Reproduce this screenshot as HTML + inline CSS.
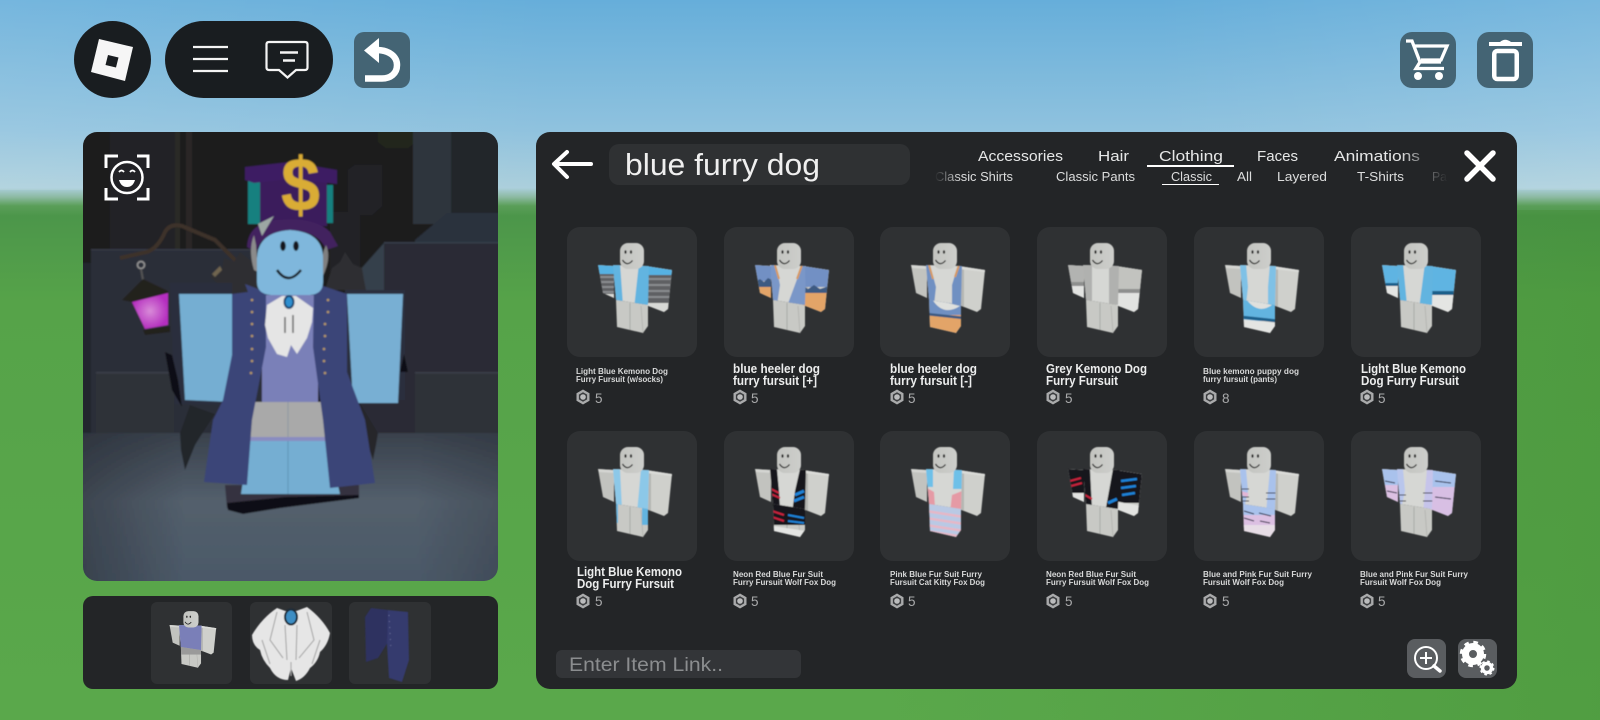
<!DOCTYPE html>
<html><head><meta charset="utf-8"><title>Avatar Editor</title>
<style>
html,body{margin:0;padding:0;width:1600px;height:720px;overflow:hidden;background:#5aa84b}
svg{display:block}
text{font-family:"Liberation Sans",sans-serif}
.lg{font-size:12.5px;font-weight:700;fill:#eceded}
.sm{font-size:8.6px;font-weight:700;fill:#d8d9d9}
.pr{font-size:13.5px;fill:#a9aaab}
.tab{font-size:15px;fill:#e6e7e7}
.sub{font-size:12.5px;fill:#dcdddd}
</style></head><body>
<svg width="1600" height="720" viewBox="0 0 1600 720" xmlns="http://www.w3.org/2000/svg">
<defs>
<filter id="s" x="-5%" y="-5%" width="110%" height="110%"><feGaussianBlur stdDeviation=".45"/></filter>
<filter id="s2" x="-5%" y="-5%" width="110%" height="110%"><feGaussianBlur stdDeviation=".7"/></filter>
<linearGradient id="bg" x1="0" y1="0" x2="0" y2="1">
<stop offset="0" stop-color="#66aeda"/><stop offset=".18" stop-color="#8fc2de"/><stop offset=".261" stop-color="#abcfdc"/><stop offset=".274" stop-color="#8bb9a0"/><stop offset=".286" stop-color="#5a9e58"/><stop offset=".3" stop-color="#4c964a"/><stop offset=".42" stop-color="#56a349"/><stop offset="1" stop-color="#5aa84b"/>
</linearGradient>
<linearGradient id="edge" x1="0" x2="1" y1="0" y2="0"><stop offset="0" stop-color="#fff" stop-opacity=".1"/><stop offset=".35" stop-color="#fff" stop-opacity="0"/><stop offset=".72" stop-color="#fff" stop-opacity="0"/><stop offset="1" stop-color="#fff" stop-opacity=".12"/></linearGradient>
<linearGradient id="gr" x1="0" x2="1" y1="0" y2="0"><stop offset="0" stop-color="#3f8a30" stop-opacity="0"/><stop offset=".55" stop-color="#3f8a30" stop-opacity="0"/><stop offset="1" stop-color="#3f8a30" stop-opacity=".35"/></linearGradient>
<linearGradient id="floor" x1="0" y1="0" x2="0" y2="1"><stop offset="0" stop-color="#39414c"/><stop offset=".45" stop-color="#535f6c"/><stop offset="1" stop-color="#4a5867"/></linearGradient>
<linearGradient id="fs" x1="0" x2="1" y1="0" y2="0"><stop offset="0" stop-color="#20242c" stop-opacity=".45"/><stop offset=".25" stop-color="#20242c" stop-opacity="0"/><stop offset=".8" stop-color="#20242c" stop-opacity="0"/><stop offset="1" stop-color="#20242c" stop-opacity=".25"/></linearGradient>
<radialGradient id="lamp"><stop offset="0" stop-color="#d88bd8"/><stop offset="1" stop-color="#b52fbf"/></radialGradient>
<linearGradient id="hd" x1="0" x2="1" y1="0" y2="0"><stop offset="0" stop-color="#c3c4c0"/><stop offset="1" stop-color="#cdcecb"/></linearGradient>
<linearGradient id="fa" x1="935" x2="960" y1="0" y2="0" gradientUnits="userSpaceOnUse"><stop offset="0" stop-color="#dcdddd" stop-opacity="0"/><stop offset="1" stop-color="#dcdddd"/></linearGradient>
<linearGradient id="fb" x1="1432" x2="1447" y1="0" y2="0" gradientUnits="userSpaceOnUse"><stop offset="0" stop-color="#dcdddd" stop-opacity=".35"/><stop offset="1" stop-color="#dcdddd" stop-opacity=".02"/></linearGradient>
<linearGradient id="fc" x1="1400" x2="1420" y1="0" y2="0" gradientUnits="userSpaceOnUse"><stop offset="0" stop-color="#e6e7e7"/><stop offset="1" stop-color="#e6e7e7" stop-opacity=".45"/></linearGradient>
<clipPath id="sc"><rect x="83" y="132" width="415" height="449" rx="14"/></clipPath>
<clipPath id="la"><path d="M31 38L47 39L47 71L36 66Z"/></clipPath>
<clipPath id="ra"><path d="M79 39L105 43L101 82L97 85L79 78Z"/></clipPath>
<clipPath id="to"><path d="M46 38L82 39L81 78L49 73Z"/></clipPath>
<clipPath id="le"><path d="M49 73L81 78L81 99L76 106L50 100Z"/></clipPath>
<g id="b">
<path d="M49 73L81 78L81 99L76 106L50 100Z" fill="#c8c9c5"/>
<path d="M63 76V103" stroke="#a2a39f" stroke-width=".8"/>
<path d="M74 79L76 106" stroke="#b0b1ad" stroke-width=".8"/>
<path d="M31 38L47 39L47 71L36 66Z" fill="#c2c3bf"/><path d="M31 38L47 39L47 42L32 41Z" fill="#d4d5d2"/>
<path d="M79 39L105 43L101 82L97 85L79 78Z" fill="#cfd0cc"/><path d="M79 39L84 40L84 80L79 78Z" fill="#b5b6b2"/><path d="M79 39L105 43L105 45L79 42Z" fill="#dadbd8"/>
<path d="M46 38L82 39L81 78L49 73Z" fill="#d6d7d4"/>
</g>
<g id="h">
<rect x="53" y="16" width="24" height="26" rx="8" fill="url(#hd)"/>
<ellipse cx="58.500" cy="25" rx="1.100" ry="1.800" fill="#222"/><ellipse cx="64" cy="25" rx="1.100" ry="1.800" fill="#222"/>
<path d="M55.500 33Q60 40 65.500 33.500" fill="none" stroke="#151515" stroke-width="1.200"/>
</g>
<g id="rb"><path d="M0-7.500L6.500-3.800V3.800L0 7.500L-6.500 3.800V-3.800Z" fill="#a9aaab"/><path d="M0-4.800L4.100-2.400V2.400L0 4.800L-4.100 2.400V-2.400Z" fill="#3a3c3e"/><circle r="2.800" fill="#bbbcbd"/></g>
</defs>

<rect width="1600" height="720" fill="url(#bg)"/>
<rect width="1600" height="190" fill="url(#edge)"/>
<rect y="210" width="1600" height="510" fill="url(#gr)"/>

<!-- top left -->
<circle cx="112.500" cy="59.500" r="38.500" fill="#191d20"/>
<path d="M99 39L133 47L125 81L91 72Z" fill="#f6f6f6"/><path d="M108 55L118.500 57.500L116 67.500L105.500 65Z" fill="#191d20"/>
<rect x="165" y="21" width="168" height="77" rx="38.500" fill="#191d20"/>
<path d="M193 47H228M193 59H228M193 71H228" stroke="#f4f4f4" stroke-width="2.200"/>
<path d="M269 42H305Q307.500 42 307.500 44.500V67.500Q307.500 70 305 70H296L287.500 77.500L279 70H269Q266.500 70 266.500 67.500V44.500Q266.500 42 269 42Z" fill="none" stroke="#f4f4f4" stroke-width="2.200"/>
<path d="M280 52.500H298M283 60.500H295" stroke="#f4f4f4" stroke-width="2.400"/>
<rect x="354" y="32" width="56" height="56" rx="10" fill="#446474"/>
<path d="M364 50.500L379 38V63Z" fill="#fff"/>
<path d="M376 50C390 50 397 57 397 65C397 74 390 78.500 382 78.500H365" fill="none" stroke="#fff" stroke-width="6.500"/>

<!-- top right -->
<rect x="1400" y="32" width="56" height="56" rx="12" fill="#446474"/>
<path d="M1406 41H1412L1420 62H1441M1420 62L1416 68.500H1444M1414.500 46H1447L1441 60H1421" fill="none" stroke="#fff" stroke-width="3.300"/>
<circle cx="1418" cy="76" r="4" fill="#fff"/><circle cx="1439" cy="76" r="4" fill="#fff"/>
<rect x="1477" y="32" width="56" height="56" rx="12" fill="#446474"/>
<path d="M1489 42H1500Q1505 37.500 1511 42H1522V46H1489Z" fill="#fff"/>
<rect x="1494.250" y="51" width="22.500" height="28" rx="3" fill="none" stroke="#fff" stroke-width="4.500"/>

<!-- avatar viewport -->
<g clip-path="url(#sc)"><g filter="url(#s2)">
<rect x="80" y="130" width="420" height="455" fill="#1a1c1e"/>
<rect x="110" y="130" width="65" height="127" fill="#232428"/>
<rect x="175" y="130" width="5" height="127" fill="#2a2926"/><rect x="186" y="130" width="6" height="127" fill="#292825"/>
<path d="M378 130H418V140L408 148H386L378 142Z" fill="#24261f"/>
<path d="M348 170L355 165H382V206L372 215H348Z" fill="#212328"/>
<rect x="330" y="212" width="30" height="60" fill="#202227"/>
<rect x="413" y="130" width="38" height="94" fill="#2f343e"/><rect x="451" y="130" width="50" height="84" fill="#24262c"/>
<path d="M415 240L447 213H500V243H415Z" fill="#2c323c"/>
<path d="M360 270L384 243H500V433H360Z" fill="#292c36"/><path d="M360 270L384 243V372H360Z" fill="#353f4b"/>
<rect x="384" y="242" width="116" height="1.500" fill="#363c48"/>
<rect x="91" y="250" width="175" height="185" fill="#2a2d38"/><rect x="91" y="249" width="170" height="1.500" fill="#353945"/>
<rect x="80" y="263" width="11" height="170" fill="#23262f"/>
<rect x="96" y="372" width="78" height="62" fill="#2d3039"/><rect x="96" y="372" width="78" height="1.500" fill="#3a3e49"/>
<rect x="415" y="372" width="85" height="62" fill="#2d3039"/><rect x="415" y="372" width="85" height="1.500" fill="#3a3e49"/>
<rect x="80" y="433" width="420" height="152" fill="url(#floor)"/>
<rect x="80" y="433" width="420" height="152" fill="url(#fs)"/>

<!-- lantern -->
<path d="M120 258L147 252Q158 248 165 232Q170 223 182 226L215 240L237 262" fill="none" stroke="#3c3029" stroke-width="4"/>
<circle cx="141" cy="265" r="3.500" fill="none" stroke="#9a9a9a" stroke-width="1.500"/><path d="M141 269L143 280" stroke="#555" stroke-width="2"/>
<path d="M122 300L143 279L168 291V300L132 302Z" fill="#23221f"/>
<path d="M132 302L168 293V325L145 329Z" fill="url(#lamp)"/>
<path d="M143 330L170 326V332L145 335Z" fill="#22201d"/>
<!-- fur & back -->
<path d="M210 277L222 268L224 258L234 262L240 252L250 260L262 262L272 290L232 295L218 284Z" fill="#2e2e30"/><path d="M212 274L220 266L222 270L215 277Z" fill="#6f654f"/>
<path d="M325 290L332 268L340 262L345 252L353 264L362 268L364 280L366 290Z" fill="#2e2e30"/>
<path d="M170 283H232V404H175Z" fill="#2c2d3c"/><path d="M345 290H405V400H345Z" fill="#2c2d3c"/>
<path d="M190 405L215 414L200 437L195 445L185 470L181 450L180 433Z" fill="#24252a"/>
<path d="M360 403L378 433L376 445L373 460L362 428Z" fill="#26262a"/>
<path d="M165 352L172 355L178 380L182 407L172 390Z" fill="#101113"/><path d="M404 354L408 372L400 372Z" fill="#101113"/>
<!-- bottom dark -->
<path d="M225 485H359V498L280 508L243 513L227 508Z" fill="#34323f"/><path d="M227 503L285 497L359 495V498L280 508L243 514L228 510Z" fill="#0f0e12"/>
<!-- body -->
<path d="M262 295H318V402H262Z" fill="#7a80b8"/>
<path d="M253 402H323L327 438H249Z" fill="#a9a9a9"/><path d="M288 402V490" stroke="#8e96a2" stroke-width="1"/>
<rect x="249" y="437" width="78" height="4" fill="#8a8cc0"/>
<path d="M249 441H328L340 494H241Z" fill="#75aed2"/><path d="M288 441V494" stroke="#5f94b5" stroke-width="1"/>
<path d="M179 294H232V402L185 400Z" fill="#75aed2"/>
<path d="M347 294H403L398 403H353Z" fill="#78afd3"/>
<!-- coat -->
<path d="M232 294L248 292L245 284L266 292V347L252 420L247 485L204 482L213 420L223 400L232 355Z" fill="#3b4478"/>
<path d="M314 283L347 294V372L365 420L375 483L330 488L323 420L313 347Z" fill="#3b4478"/>
<g fill="#b89a66"><circle cx="252" cy="300" r="1.300"/><circle cx="252" cy="312" r="1.300"/><circle cx="252" cy="324" r="1.300"/><circle cx="252" cy="336" r="1.300"/><circle cx="252" cy="349" r="1.300"/><circle cx="252" cy="361" r="1.300"/><circle cx="251" cy="373" r="1.300"/><circle cx="328" cy="300" r="1.300"/><circle cx="328" cy="312" r="1.300"/><circle cx="325" cy="324" r="1.300"/><circle cx="325" cy="336" r="1.300"/><circle cx="324" cy="349" r="1.300"/><circle cx="324" cy="361" r="1.300"/><circle cx="325" cy="373" r="1.300"/></g>
<!-- hat -->
<rect x="248" y="180" width="15" height="44" fill="#16807f"/><rect x="326" y="185" width="7" height="38" fill="#16807f"/>
<rect x="260" y="178" width="67" height="48" fill="#3a1c5c"/>
<path d="M245 167L290 162L337 170V184L320 182L290 179L254 183L245 180Z" fill="#3e1f63"/>
<path d="M247 247Q248 224 275 220Q315 216 330 232L338 246L326 250Q320 232 290 230Q262 232 256 252Z" fill="#42205f"/>
<path d="M258 224L274 216L262 236Z" fill="#9ca7a3"/>
<path d="M254 235Q248 250 254 270L258 272L256 245Z" fill="#8b8b8b"/><path d="M326 245Q332 258 322 278L318 272L324 250Z" fill="#7f7f7f"/>
<!-- head -->
<path d="M257 258Q258 232 290 230Q323 232 323 258V282Q323 294 310 295H271Q257 294 257 282Z" fill="#7fb7dc"/>
<ellipse cx="283" cy="246" rx="2.800" ry="5" fill="#15171a"/><ellipse cx="296" cy="246" rx="2.800" ry="5" fill="#15171a"/>
<path d="M277 270Q288 286 301 270" fill="none" stroke="#15171a" stroke-width="2.500"/>
<!-- cravat -->
<path d="M267 305L282 296L296 296L313 308L312 322L307 338L297 354L291 345L287 357L277 354L268 338L265 325Z" fill="#e5e5e5"/>
<path d="M285 317V333M293 315V333" stroke="#333" stroke-width="1.300"/>
<ellipse cx="289" cy="302" rx="5.500" ry="7" fill="#17416a"/><ellipse cx="289" cy="302" rx="3.500" ry="5" fill="#2f8fd0"/>
<text x="281" y="211" font-size="76" font-weight="700" fill="#d9ac34" textLength="39" lengthAdjust="spacingAndGlyphs">$</text>
</g></g>
<!-- face icon -->
<path d="M106 168V156H118M137 156H148V168M148 188V199H137M118 199H106V188" fill="none" stroke="#fff" stroke-width="3"/>
<circle cx="127" cy="177.500" r="15.500" fill="none" stroke="#fff" stroke-width="2.500"/>
<path d="M119 172Q121.500 169 124 172M130 172Q132.500 169 135 172" fill="none" stroke="#fff" stroke-width="1.800"/>
<path d="M119 180H135Q133 187 127 187Q121 187 119 180Z" fill="#fff"/>

<!-- equipped bar -->
<rect x="83" y="596" width="415" height="93" rx="10" fill="#232527"/>
<rect x="151" y="602" width="81" height="82" rx="6" fill="#2f3133"/><rect x="250" y="602" width="82" height="82" rx="6" fill="#2f3133"/><rect x="349" y="602" width="82" height="82" rx="6" fill="#2f3133"/>
<g transform="translate(150,601) scale(.63)" filter="url(#s)"><use href="#b"/><g clip-path="url(#to)"><rect x="46" y="38" width="36" height="42" fill="#7a7fb8"/></g><g clip-path="url(#le)"><rect x="46" y="73" width="36" height="12" fill="#9a9a9a"/></g><use href="#h"/></g>
<g filter="url(#s)">
<path d="M277 608L291 613L307 607Q322 618 330 633Q328 645 320 652Q318 662 310 668Q305 678 296 681L291 668L288 680Q276 680 270 668Q262 660 260 650Q252 645 252 635Q262 618 277 608Z" fill="#e6e6e6"/>
<path d="M277 612L270 640L283 658M307 612L314 640L299 658M285 625L287 660M297 625L296 660M291 662V676M262 640L270 664M320 640L312 664" fill="none" stroke="#adadad" stroke-width="1.200"/>
<ellipse cx="291" cy="617" rx="7" ry="8.500" fill="#1c2a38"/><ellipse cx="291" cy="617" rx="5" ry="6.500" fill="#3d8ec4"/>
<path d="M365 617L371 608L388 610V642L378 658L366 662Z" fill="#2d3260"/><path d="M388 610L408 612L409 660L402 682L389 678L387 645Z" fill="#343a6e"/>
<path d="M389 615L391 650" stroke="#6a6f9a" stroke-width="1" stroke-dasharray="1 5"/>
</g>

<!-- catalog panel -->
<rect x="536" y="132" width="981" height="557" rx="14" fill="#232527"/>
<path d="M591 164H555M567 152L554 164L567 177" fill="none" stroke="#fff" stroke-width="4" stroke-linecap="round" stroke-linejoin="round"/>
<rect x="609" y="144" width="301" height="41" rx="10" fill="#2f3133"/>
<text x="625" y="175" font-size="31" fill="#efefef" textLength="195" lengthAdjust="spacingAndGlyphs">blue furry dog</text>

<text class="tab" x="978" y="161" textLength="85" lengthAdjust="spacingAndGlyphs">Accessories</text>
<text class="tab" x="1098" y="161" textLength="31" lengthAdjust="spacingAndGlyphs">Hair</text>
<text class="tab" x="1159" y="161" textLength="64" lengthAdjust="spacingAndGlyphs">Clothing</text>
<text class="tab" x="1257" y="161" textLength="41" lengthAdjust="spacingAndGlyphs">Faces</text>
<text class="tab" x="1334" y="161" textLength="86" lengthAdjust="spacingAndGlyphs" style="fill:url(#fc)">Animations</text>
<rect x="1147" y="165" width="87" height="2" fill="#fff"/>
<text class="sub" x="935" y="181" textLength="78" lengthAdjust="spacingAndGlyphs" style="fill:url(#fa)">Classic Shirts</text>
<text class="sub" x="1056" y="181" textLength="79" lengthAdjust="spacingAndGlyphs">Classic Pants</text>
<text class="sub" x="1171" y="181" textLength="41" lengthAdjust="spacingAndGlyphs">Classic</text>
<text class="sub" x="1237" y="181" textLength="15" lengthAdjust="spacingAndGlyphs">All</text>
<text class="sub" x="1277" y="181" textLength="50" lengthAdjust="spacingAndGlyphs">Layered</text>
<text class="sub" x="1357" y="181" textLength="47" lengthAdjust="spacingAndGlyphs">T-Shirts</text>
<text class="sub" x="1432" y="181" textLength="15" lengthAdjust="spacingAndGlyphs" style="fill:url(#fb)">Pa</text>
<rect x="1162" y="184" width="57" height="1" fill="#fff"/>
<path d="M1467 153L1493 179M1493 153L1467 179" stroke="#fff" stroke-width="5.500" stroke-linecap="round"/>

<!-- cards -->
<g fill="#2f3133">
<rect x="567" y="227" width="130" height="130" rx="13"/><rect x="724" y="227" width="130" height="130" rx="13"/><rect x="880" y="227" width="130" height="130" rx="13"/><rect x="1037" y="227" width="130" height="130" rx="13"/><rect x="1194" y="227" width="130" height="130" rx="13"/><rect x="1351" y="227" width="130" height="130" rx="13"/>
<rect x="567" y="431" width="130" height="130" rx="13"/><rect x="724" y="431" width="130" height="130" rx="13"/><rect x="880" y="431" width="130" height="130" rx="13"/><rect x="1037" y="431" width="130" height="130" rx="13"/><rect x="1194" y="431" width="130" height="130" rx="13"/><rect x="1351" y="431" width="130" height="130" rx="13"/>
</g>

<!-- R1 C1 -->
<g transform="translate(567,227)" filter="url(#s)"><use href="#b"/>
<g clip-path="url(#la)"><rect x="30" y="36" width="20" height="11" fill="#56b2e3"/><rect x="30" y="47" width="20" height="20" fill="#5e6064"/><path d="M30 50H50M30 55H50M30 60H50M30 65H50" stroke="#8a8c8f" stroke-width="2"/><rect x="30" y="67" width="20" height="5" fill="#d8d9d6"/></g>
<g clip-path="url(#ra)"><rect x="78" y="36" width="30" height="12" fill="#56b2e3"/><rect x="78" y="48" width="30" height="30" fill="#5e6064"/><path d="M78 52H108M78 58H108M78 64H108M78 70H108" stroke="#8a8c8f" stroke-width="2"/><rect x="78" y="76" width="30" height="10" fill="#d8d9d6"/></g>
<g clip-path="url(#to)"><path d="M44 36H53L56 78H44Z" fill="#62b4e0"/><path d="M72 36H86V82H67Z" fill="#62b4e0"/></g><use href="#h"/></g>
<!-- R1 C2 -->
<g transform="translate(724,227)" filter="url(#s)"><use href="#b"/>
<g clip-path="url(#la)"><rect x="30" y="36" width="20" height="18" fill="#7290c4"/><path d="M30 55L36 52L40 55L44 51L50 54V60H30Z" fill="#3e5a82"/><rect x="30" y="60" width="20" height="12" fill="#e3a468"/></g>
<g clip-path="url(#ra)"><rect x="78" y="36" width="30" height="24" fill="#7290c4"/><path d="M78 58L84 62L90 58L96 62L108 58V66H78Z" fill="#3e5a82"/><rect x="78" y="66" width="30" height="20" fill="#e3a468"/></g>
<g clip-path="url(#to)"><path d="M47 38H52L56 58L53 78L45 78Z" fill="#7a97c8"/><path d="M81 38H78L72 55L62 82H82Z" fill="#7a97c8"/><path d="M51 38L55 52M78 38L73 52" stroke="#d89a5e" stroke-width="2"/></g><use href="#h"/></g>
<!-- R1 C3 -->
<g transform="translate(880,227)" filter="url(#s)"><use href="#b"/>
<g clip-path="url(#to)"><path d="M46 38H50L56 60L54 78H46Z" fill="#6f90c2"/><path d="M82 38H78L72 58L72 82H82Z" fill="#6f90c2"/><path d="M49 38L53 52M79 38L75 50" stroke="#d89a5e" stroke-width="2"/></g>
<g clip-path="url(#le)"><rect x="46" y="72" width="38" height="18" fill="#6f90c2"/><path d="M52 72Q63 90 80 79Z" fill="#dfe0dd"/><rect x="46" y="88" width="38" height="20" fill="#e3a468"/><path d="M46 87L84 91" stroke="#3e5a82" stroke-width="2.500"/></g><use href="#h"/></g>
<!-- R1 C4 -->
<g transform="translate(1037,227)" filter="url(#s)"><use href="#b"/>
<g clip-path="url(#la)"><rect x="30" y="36" width="20" height="21" fill="#b2b3b1"/><rect x="30" y="55" width="20" height="4" fill="#8e8f8e"/><rect x="30" y="59" width="20" height="14" fill="#e2e3e1"/></g>
<g clip-path="url(#ra)"><rect x="78" y="36" width="30" height="28" fill="#c2c3bf"/><rect x="78" y="62" width="30" height="4" fill="#8e8f8e"/><rect x="78" y="66" width="30" height="20" fill="#e2e3e1"/></g>
<g clip-path="url(#to)"><rect x="46" y="38" width="9" height="40" fill="#b0b1af"/><rect x="72" y="38" width="12" height="44" fill="#b0b1af"/></g><use href="#h"/></g>
<!-- R1 C5 -->
<g transform="translate(1194,227)" filter="url(#s)"><use href="#b"/>
<g clip-path="url(#to)"><path d="M44 36H52L54 60L52 78H44Z" fill="#7fc1e6"/><path d="M76 36H86V84H74L74 60Z" fill="#7fc1e6"/></g>
<g clip-path="url(#le)"><rect x="46" y="72" width="38" height="22" fill="#62b4e0"/><path d="M52 72Q64 88 78 78Z" fill="#dfe0dd"/><path d="M46 90L84 94" stroke="#1f5f8a" stroke-width="3"/><path d="M46 92L84 96V108H46Z" fill="#e4e5e3"/></g><use href="#h"/></g>
<!-- R1 C6 -->
<g transform="translate(1351,227)" filter="url(#s)"><use href="#b"/>
<g clip-path="url(#la)"><rect x="30" y="36" width="20" height="21" fill="#5fb4e2"/><rect x="30" y="56" width="20" height="3" fill="#1f5f8a"/><rect x="30" y="59" width="20" height="14" fill="#e4e5e3"/></g>
<g clip-path="url(#ra)"><rect x="78" y="36" width="30" height="28" fill="#5fb4e2"/><rect x="78" y="64" width="30" height="4" fill="#1f5f8a"/><rect x="78" y="68" width="30" height="18" fill="#e4e5e3"/></g>
<g clip-path="url(#to)"><path d="M44 36H52L56 78H44Z" fill="#62b4e0"/><path d="M74 36H86V82H68Z" fill="#62b4e0"/></g><use href="#h"/></g>
<!-- R2 C1 -->
<g transform="translate(567,431)" filter="url(#s)"><use href="#b"/>
<g clip-path="url(#to)"><path d="M46 38H53L55 78H46Z" fill="#8cc8e8"/><path d="M74 38H84V82H70Z" fill="#8cc8e8"/></g>
<g clip-path="url(#le)"><rect x="46" y="72" width="5" height="20" fill="#62b4e0"/><rect x="75" y="72" width="9" height="22" fill="#62b4e0"/></g><use href="#h"/></g>
<!-- R2 C2 -->
<g transform="translate(724,431)" filter="url(#s)"><use href="#b"/>
<g clip-path="url(#to)"><path d="M46 38H53L55 60L56 78H46Z" fill="#15161a"/><path d="M76 38H84V82H68L71 60Z" fill="#15161a"/><path d="M47 58L55 62M47 63L56 67" stroke="#c8243c" stroke-width="2"/><path d="M71 64L80 60M70 70L80 66" stroke="#1f82d8" stroke-width="3"/></g>
<g clip-path="url(#le)"><rect x="46" y="72" width="38" height="22" fill="#15161a"/><path d="M48 80L60 84M48 86L60 90" stroke="#c8243c" stroke-width="2"/><path d="M64 84L80 87M64 90L80 92" stroke="#1f82d8" stroke-width="2"/><path d="M49 95L82 100V108H49Z" fill="#e4e5e3"/></g><use href="#h"/></g>
<!-- R2 C3 -->
<g transform="translate(880,431)" filter="url(#s)"><use href="#b"/>
<g clip-path="url(#to)"><path d="M46 38H53L53 56H46Z" fill="#6ec0e8"/><path d="M74 38H84V58H73Z" fill="#6ec0e8"/><path d="M47 57L54 61L55 76H47Z" fill="#e59aa5"/><path d="M72 64L82 60V82H70Z" fill="#e59aa5"/></g>
<g clip-path="url(#le)"><rect x="46" y="72" width="38" height="36" fill="#b9c9e4"/><path d="M46 80L84 86M46 87L84 93M46 94L84 100M46 100L84 106" stroke="#e6b7c6" stroke-width="2.500"/></g><use href="#h"/></g>
<!-- R2 C4 -->
<g transform="translate(1037,431)" filter="url(#s)"><use href="#b"/>
<g clip-path="url(#la)"><rect x="30" y="36" width="20" height="26" fill="#15161a"/><path d="M33 50L44 47M34 55L45 52" stroke="#c8243c" stroke-width="2"/><rect x="30" y="62" width="20" height="12" fill="#e2e3e1"/></g>
<g clip-path="url(#ra)"><rect x="78" y="36" width="30" height="36" fill="#15161a"/><path d="M84 50L100 48M84 57L99 55M85 64L98 62" stroke="#1f82d8" stroke-width="2.500"/><path d="M78 70L108 76V90H78Z" fill="#e2e3e1"/></g>
<g clip-path="url(#to)"><path d="M46 38H53L55 78H46Z" fill="#15161a"/><path d="M76 38H84V82H68Z" fill="#15161a"/><path d="M48 64L55 68" stroke="#c8243c" stroke-width="2"/><path d="M71 72L80 68" stroke="#1f82d8" stroke-width="3"/></g><use href="#h"/></g>
<!-- R2 C5 -->
<g transform="translate(1194,431)" filter="url(#s)"><use href="#b"/>
<g clip-path="url(#to)"><path d="M46 38H52L54 60L50 78H46Z" fill="#a9c2ec"/><path d="M76 38H84V82H72Z" fill="#a9c2ec"/><path d="M47 62L54 64" stroke="#e2b6d6" stroke-width="4"/><path d="M47 58H55M47 66H55M47 70H55" stroke="#2a2a3a" stroke-width="1"/><path d="M72 62H82M72 68H82" stroke="#2a2a3a" stroke-width="1"/></g>
<g clip-path="url(#le)"><rect x="46" y="72" width="38" height="12" fill="#a9c2ec"/><rect x="46" y="84" width="38" height="12" fill="#dcc0e2"/><rect x="46" y="94" width="38" height="14" fill="#e7dde6"/><path d="M50 80L60 83M65 82L77 85M50 87L60 90M66 90L76 92" stroke="#23233a" stroke-width="1"/></g><use href="#h"/></g>
<!-- R2 C6 -->
<g transform="translate(1351,431)" filter="url(#s)"><use href="#b"/>
<g clip-path="url(#la)"><rect x="30" y="36" width="20" height="18" fill="#a9c2ec"/><rect x="30" y="54" width="20" height="20" fill="#dcc0e2"/><path d="M34 50L44 52M36 60L46 62" stroke="#23233a" stroke-width="1"/></g>
<g clip-path="url(#ra)"><rect x="78" y="36" width="30" height="20" fill="#a9c2ec"/><rect x="78" y="56" width="30" height="30" fill="#d8bfe4"/><path d="M84 50L100 52M84 66L100 68" stroke="#23233a" stroke-width="1"/></g>
<g clip-path="url(#to)"><path d="M46 38H52L54 60L50 78H46Z" fill="#b9c6ec"/><path d="M76 38H84V82H72Z" fill="#c6c4ea"/><path d="M47 64H55M47 70H55M72 62H82M72 70H82" stroke="#2a2a3a" stroke-width="1"/></g><use href="#h"/></g>

<!-- labels -->
<text class="sm" x="576" y="374" textLength="92" lengthAdjust="spacingAndGlyphs">Light Blue Kemono Dog</text><text class="sm" x="576" y="382" textLength="87" lengthAdjust="spacingAndGlyphs">Furry Fursuit (w/socks)</text>
<text class="lg" x="733" y="373" textLength="87" lengthAdjust="spacingAndGlyphs">blue heeler dog</text><text class="lg" x="733" y="385" textLength="84" lengthAdjust="spacingAndGlyphs">furry fursuit [+]</text>
<text class="lg" x="890" y="373" textLength="87" lengthAdjust="spacingAndGlyphs">blue heeler dog</text><text class="lg" x="890" y="385" textLength="82" lengthAdjust="spacingAndGlyphs">furry fursuit [-]</text>
<text class="lg" x="1046" y="373" textLength="101" lengthAdjust="spacingAndGlyphs">Grey Kemono Dog</text><text class="lg" x="1046" y="385" textLength="72" lengthAdjust="spacingAndGlyphs">Furry Fursuit</text>
<text class="sm" x="1203" y="374" textLength="96" lengthAdjust="spacingAndGlyphs">Blue kemono puppy dog</text><text class="sm" x="1203" y="382" textLength="74" lengthAdjust="spacingAndGlyphs">furry fursuit (pants)</text>
<text class="lg" x="1361" y="373" textLength="105" lengthAdjust="spacingAndGlyphs">Light Blue Kemono</text><text class="lg" x="1361" y="385" textLength="98" lengthAdjust="spacingAndGlyphs">Dog Furry Fursuit</text>

<text class="lg" x="577" y="576" textLength="105" lengthAdjust="spacingAndGlyphs">Light Blue Kemono</text><text class="lg" x="577" y="588" textLength="97" lengthAdjust="spacingAndGlyphs">Dog Furry Fursuit</text>
<text class="sm" x="733" y="577" textLength="90" lengthAdjust="spacingAndGlyphs">Neon Red Blue Fur Suit</text><text class="sm" x="733" y="585" textLength="103" lengthAdjust="spacingAndGlyphs">Furry Fursuit Wolf Fox Dog</text>
<text class="sm" x="890" y="577" textLength="92" lengthAdjust="spacingAndGlyphs">Pink Blue Fur Suit Furry</text><text class="sm" x="890" y="585" textLength="95" lengthAdjust="spacingAndGlyphs">Fursuit Cat Kitty Fox Dog</text>
<text class="sm" x="1046" y="577" textLength="90" lengthAdjust="spacingAndGlyphs">Neon Red Blue Fur Suit</text><text class="sm" x="1046" y="585" textLength="103" lengthAdjust="spacingAndGlyphs">Furry Fursuit Wolf Fox Dog</text>
<text class="sm" x="1203" y="577" textLength="109" lengthAdjust="spacingAndGlyphs">Blue and Pink Fur Suit Furry</text><text class="sm" x="1203" y="585" textLength="81" lengthAdjust="spacingAndGlyphs">Fursuit Wolf Fox Dog</text>
<text class="sm" x="1360" y="577" textLength="108" lengthAdjust="spacingAndGlyphs">Blue and Pink Fur Suit Furry</text><text class="sm" x="1360" y="585" textLength="81" lengthAdjust="spacingAndGlyphs">Fursuit Wolf Fox Dog</text>

<!-- prices -->
<use href="#rb" x="583" y="397"/><use href="#rb" x="740" y="397"/><use href="#rb" x="897" y="397"/><use href="#rb" x="1053" y="397"/><use href="#rb" x="1210" y="397"/><use href="#rb" x="1367" y="397"/>
<use href="#rb" x="583" y="601"/><use href="#rb" x="740" y="601"/><use href="#rb" x="897" y="601"/><use href="#rb" x="1053" y="601"/><use href="#rb" x="1210" y="601"/><use href="#rb" x="1367" y="601"/>
<text class="pr" x="595" y="403">5</text><text class="pr" x="751" y="403">5</text><text class="pr" x="908" y="403">5</text><text class="pr" x="1065" y="403">5</text><text class="pr" x="1222" y="403">8</text><text class="pr" x="1378" y="403">5</text>
<text class="pr" x="595" y="606">5</text><text class="pr" x="751" y="606">5</text><text class="pr" x="908" y="606">5</text><text class="pr" x="1065" y="606">5</text><text class="pr" x="1222" y="606">5</text><text class="pr" x="1378" y="606">5</text>

<!-- footer -->
<rect x="556" y="650" width="245" height="28" rx="6" fill="#333538"/>
<text x="569" y="671" font-size="19.500" fill="#8b8d8f" textLength="154" lengthAdjust="spacingAndGlyphs">Enter Item Link..</text>
<rect x="1407" y="639" width="39" height="39" rx="8" fill="#5a5d60"/>
<circle cx="1426" cy="658" r="11" fill="none" stroke="#fff" stroke-width="2"/><path d="M1426 652V664M1420 658H1432" stroke="#fff" stroke-width="2"/><path d="M1434 666L1440 671" stroke="#fff" stroke-width="3.500" stroke-linecap="round"/>
<rect x="1458" y="639" width="39" height="39" rx="8" fill="#5a5d60"/>
<circle cx="1473" cy="654" r="7.500" fill="none" stroke="#fff" stroke-width="7"/><circle cx="1473" cy="654" r="11.500" fill="none" stroke="#fff" stroke-width="3.500" stroke-dasharray="4.500 4.530"/>
<circle cx="1487" cy="668" r="4.500" fill="none" stroke="#fff" stroke-width="3.500"/><circle cx="1487" cy="668" r="6.500" fill="none" stroke="#fff" stroke-width="2" stroke-dasharray="2.550 2.550"/>
</svg>
</body></html>
